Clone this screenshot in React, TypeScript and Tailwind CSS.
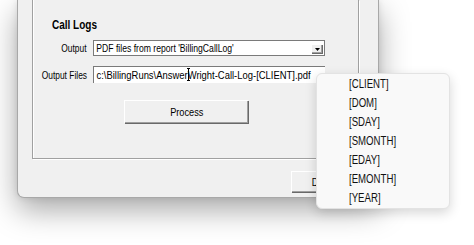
import React from "react";

const font = "font-['Liberation_Sans',Arial,sans-serif]";

const items = ["[CLIENT]", "[DOM]", "[SDAY]", "[SMONTH]", "[EDAY]", "[EMONTH]", "[YEAR]"];

export default function App() {
  return (
    <div className={`${font} relative w-[474px] h-[245px] bg-white overflow-hidden`}>
      {/* Window */}
      <div className="ml-[17px] w-[362px] h-[198px] bg-[#f0f0f0] border border-t-0 border-[#a8a8a8] rounded-b-[7px] shadow-[0_12px_30px_rgba(0,0,0,0.34),0_0_6px_rgba(0,0,0,0.10)] pl-[14px] flex flex-col">
        {/* Group box */}
        <div className="relative w-[327px] h-[159px] border-l border-r border-b border-[#a0a0a0] shadow-[1px_1px_0_#ffffff,inset_1px_0_0_#ffffff] pt-[17px] flex flex-col">
          <div className="pl-[19px] h-[16px] flex items-center">
            <span className="inline-block origin-left scale-x-[0.8] text-[12.5px] font-bold leading-[16px] text-black whitespace-nowrap">
              Call Logs
            </span>
          </div>

          <div className="mt-[7px] flex items-center h-[16px]">
            <div className="w-[54px] flex justify-end">
              <span className="inline-block origin-right scale-x-[0.73] text-[11.5px] leading-[14px] text-black whitespace-nowrap">
                Output
              </span>
            </div>
            <div className="ml-[6px] relative w-[232px] h-[16px] bg-white border border-[#7a7a7a] flex items-center">
              <span className="inline-block origin-left scale-x-[0.75] pl-[3px] text-[11.5px] leading-[14px] text-black whitespace-nowrap">
                PDF files from report 'BillingCallLog'
              </span>
              <div className="absolute right-[2px] top-[3px] w-[11px] h-[9px] bg-[#f0f0f0] border-t border-l border-white shadow-[1px_1px_0_#696969,inset_-1px_-1px_0_#a0a0a0] flex items-center justify-center">
                <svg width="5" height="3" viewBox="0 0 5 3">
                  <path d="M0 0H5L2.5 3Z" fill="#000" />
                </svg>
              </div>
            </div>
          </div>

          <div className="mt-[10px] flex items-center h-[17px]">
            <div className="w-[54px] flex justify-end">
              <span className="inline-block origin-right scale-x-[0.73] text-[11.5px] leading-[14px] text-black whitespace-nowrap">
                Output Files
              </span>
            </div>
            <div className="ml-[6px] relative w-[232px] h-[17px] bg-white border-t border-l border-[#7a7a7a] flex items-center">
              <span className="inline-block origin-left scale-x-[0.82] pl-[3px] text-[11.5px] leading-[14px] text-black whitespace-nowrap">
                c:\BillingRuns\AnswerWright-Call-Log-[CLIENT].pdf
              </span>
              {/* I-beam cursor */}
              <div className="absolute left-[93px] top-[1px] w-[3px] h-[13px] flex flex-col items-center">
                <div className="w-[3px] h-[1px] bg-black" />
                <div className="w-[1px] flex-1 bg-black" />
                <div className="w-[3px] h-[1px] bg-black" />
              </div>
            </div>
          </div>

          <div className="mt-[17px] ml-[91px] w-[124px] h-[23px] bg-[#f0f0f0] border-t border-l border-white shadow-[1px_1px_0_#696969,inset_-1px_-1px_0_#a0a0a0] flex items-center justify-center">
            <span className="inline-block scale-x-[0.8] text-[11.5px] leading-[14px] text-black">Process</span>
          </div>
        </div>

        {/* Done button */}
        <div className="mt-[12px] ml-[259px] w-[62px] h-[21px] bg-[#f0f0f0] border-t border-l border-white shadow-[1px_1px_0_#696969,inset_-1px_-1px_0_#a0a0a0] flex items-center justify-center">
          <span className="inline-block scale-x-[0.8] text-[11.5px] leading-[14px] text-black">Done</span>
        </div>
      </div>

      {/* Popup menu */}
      <div className="absolute left-[316px] top-[73px] w-[134px] h-[136px] bg-[#f9f9f9] border border-[#e3e3e3] rounded-[6px] shadow-[0_4px_12px_rgba(0,0,0,0.16)] flex flex-col">
        {items.map((t) => (
          <div key={t} className="h-[19px] pl-[32px] flex items-center">
            <span className="inline-block origin-left scale-x-[0.77] text-[12.5px] leading-[16px] text-[#111111] whitespace-nowrap">
              {t}
            </span>
          </div>
        ))}
      </div>
    </div>
  );
}
